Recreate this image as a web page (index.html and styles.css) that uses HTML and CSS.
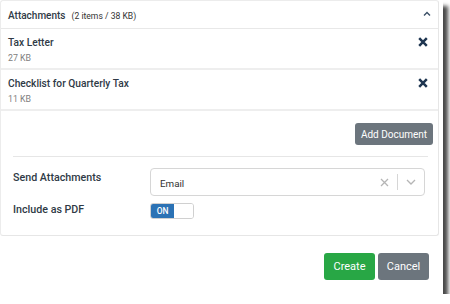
FILE: index.html
```html
<!DOCTYPE html>
<html>
<head>
<meta charset="utf-8">
<link rel="stylesheet" href="styles.css">
</head>
<body>
<div class="dialog">
  <div class="card">
    <div class="card-header">
      <span class="title">Attachments</span>
      <span class="count">(2 items / 38 KB)</span>
      <span class="chev">
        <svg width="8" height="6" viewBox="0 0 8 6"><path d="M1 4.5 L4 1.5 L7 4.5" fill="none" stroke="#3a4f66" stroke-width="1.4"/></svg>
      </span>
    </div>
    <div class="item">
      <div class="item-text">
        <div class="item-name">Tax Letter</div>
        <div class="item-size">27 KB</div>
      </div>
      <svg class="close" width="10" height="10" viewBox="0 0 10 10"><path d="M1.2 1.2 L8.8 8.8 M8.8 1.2 L1.2 8.8" stroke="#1e3550" stroke-width="2.5"/></svg>
    </div>
    <div class="item">
      <div class="item-text">
        <div class="item-name">Checklist for Quarterly Tax</div>
        <div class="item-size">11 KB</div>
      </div>
      <svg class="close" width="10" height="10" viewBox="0 0 10 10"><path d="M1.2 1.2 L8.8 8.8 M8.8 1.2 L1.2 8.8" stroke="#1e3550" stroke-width="2.5"/></svg>
    </div>
    <div class="actions">
      <button class="btn btn-gray btn-add">Add Document</button>
    </div>
    <div class="form">
      <div class="row">
        <div class="label">Send Attachments</div>
        <div class="select">
          <span class="select-value">Email</span>
          <span class="select-tools">
            <svg width="9" height="9" viewBox="0 0 9 9"><path d="M1 1 L8 8 M8 1 L1 8" stroke="#b5b5b5" stroke-width="1.3"/></svg>
            <span class="sep"></span>
            <svg width="10" height="6" viewBox="0 0 10 6"><path d="M1 1 L5 5 L9 1" fill="none" stroke="#b5b5b5" stroke-width="1.3"/></svg>
          </span>
        </div>
      </div>
      <div class="row row-pdf">
        <div class="label">Include as PDF</div>
        <div class="toggle"><span class="toggle-on">ON</span><span class="toggle-off"></span></div>
      </div>
    </div>
  </div>
  <div class="footer">
    <button class="btn btn-green">Create</button>
    <button class="btn btn-gray">Cancel</button>
  </div>
</div>
</body>
</html>
```

FILE: styles.css
```css
html, body {
  margin: 0;
  padding: 0;
  background: #ffffff;
}
body {
  font-family: Roboto, "Open Sans", sans-serif;
  color: #333;
}
.dialog {
  width: 443px;
  height: 294px;
  background: #fff;
  box-sizing: border-box;
  padding-right: 4px;
  box-shadow: 5px 6px 4px rgba(0,0,0,0.72);
}
.card {
  border: 1px solid #e6e6e6;
  border-top: 1px solid #ececec;
  border-left: 1px solid #ececec;
  border-radius: 3px;
  height: 236px;
  box-sizing: border-box;
}
.card-header {
  display: flex;
  align-items: center;
  height: 28px;
  box-sizing: border-box;
  padding: 1px 7px 0 7px;
  border-bottom: 1px solid #e8e8e8;
}
.title {
  font-size: 10px;
  font-weight: 500;
  color: #2f3a46;
}
.count {
  font-size: 8.6px;
  margin-left: 6px;
  color: #333;
  padding-top: 1px;
}
.chev {
  margin-left: auto;
  display: flex;
  margin-top: -3px;
}
.item {
  display: flex;
  align-items: flex-start;
  height: 41px;
  box-sizing: border-box;
  padding: 7px 10px 0 7px;
  border-bottom: 2px solid #eeeeee;
}
.item-text {
  flex: 1;
}
.item-name {
  font-size: 10.2px;
  font-weight: 500;
  color: #2f3a46;
  line-height: 14px;
}
.item-size {
  font-size: 8.8px;
  color: #808080;
  line-height: 14px;
  margin-top: 1px;
}
.close {
  margin-top: 1px;
}
.actions {
  display: flex;
  justify-content: flex-end;
  padding: 12px 5px 0 0;
}
.btn {
  font-family: Roboto, "Open Sans", sans-serif;
  border: none;
  border-radius: 3px;
  color: #fff;
  padding: 0;
  cursor: pointer;
}
.btn-gray {
  background: #6c757d;
}
.btn-green {
  background: #28a745;
}
.btn-add {
  width: 78px;
  height: 22px;
  font-size: 10px;
}
.form {
  margin: 11px 10px 0 12px;
  border-top: 1px solid #e6e6e6;
  padding-top: 11px;
}
.row {
  display: flex;
  align-items: flex-start;
}
.label {
  width: 137px;
  font-size: 10.7px;
  font-weight: 500;
  color: #2f3a46;
  padding-top: 3px;
}
.select {
  width: 275px;
  height: 28px;
  box-sizing: border-box;
  border: 1px solid #d6d6d6;
  border-radius: 4px;
  display: flex;
  align-items: center;
  padding: 0 8px 0 9px;
}
.select-value {
  font-size: 9.8px;
  color: #333;
  flex: 1;
  padding-top: 2px;
}
.select-tools {
  display: flex;
  align-items: center;
  gap: 8px;
}
.sep {
  width: 1px;
  height: 16px;
  background: #d6d6d6;
}
.row-pdf {
  margin-top: 7px;
}
.row-pdf .label {
  padding-top: 0;
}
.toggle {
  display: flex;
  width: 44px;
  height: 16px;
  box-sizing: border-box;
  border: 1px solid #d0d0d0;
  border-radius: 3px;
  overflow: hidden;
}
.toggle-on {
  width: 23px;
  background: #2b72b5;
  color: #fff;
  font-size: 8.4px;
  font-weight: 500;
  display: flex;
  align-items: center;
  justify-content: center;
}
.toggle-off {
  flex: 1;
  background: #fff;
}
.footer {
  display: flex;
  justify-content: flex-end;
  gap: 3px;
  padding: 17px 10px 0 0;
}
.footer .btn {
  width: 51px;
  height: 27px;
  font-size: 11px;
}
```
